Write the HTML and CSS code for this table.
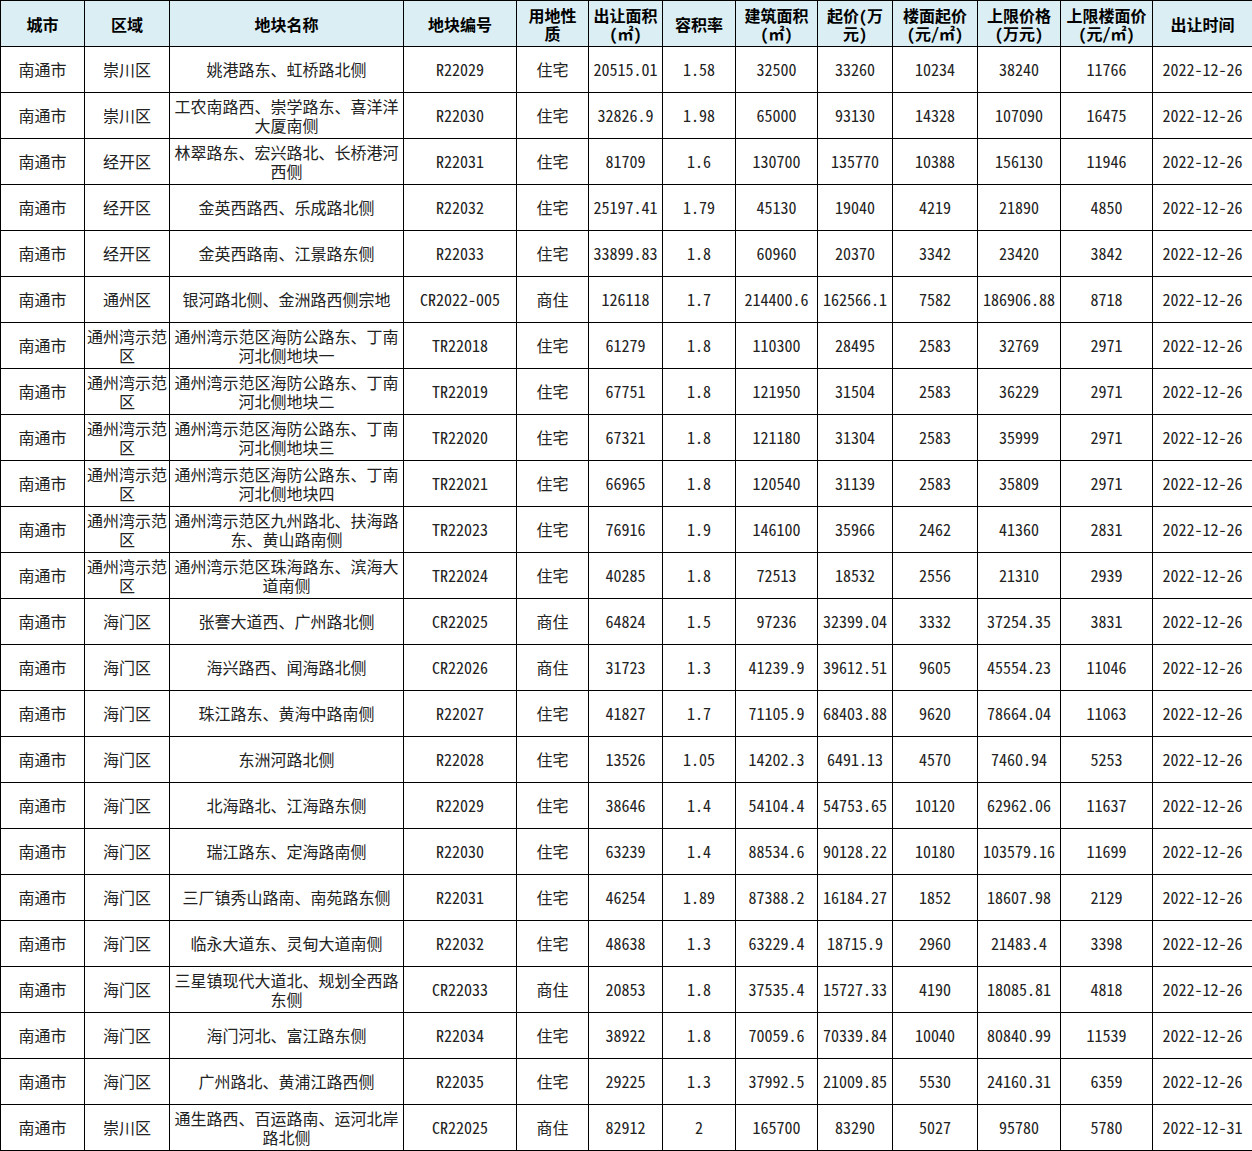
FILE: index.html
```html
<!DOCTYPE html>
<html lang="zh-CN">
<head>
<meta charset="utf-8">
<title>南通市土地出让</title>
<link rel="stylesheet" href="styles.css">
</head>
<body>
<table class="land">
<colgroup>
<col class="c1"><col class="c2"><col class="c3"><col class="c4"><col class="c5"><col class="c6"><col class="c7"><col class="c8"><col class="c9"><col class="c10"><col class="c11"><col class="c12"><col class="c13">
</colgroup>
<thead>
<tr>
<th>城市</th><th>区域</th><th>地块名称</th><th>地块编号</th><th class="tight">用地性质</th><th>出让面积(㎡)</th><th>容积率</th><th>建筑面积(㎡)</th><th>起价(万元)</th><th>楼面起价(元/㎡)</th><th>上限价格(万元)</th><th>上限楼面价(元/㎡)</th><th>出让时间</th>
</tr>
</thead>
<tbody>
<tr><td>南通市</td><td>崇川区</td><td>姚港路东、虹桥路北侧</td><td>R22029</td><td>住宅</td><td>20515.01</td><td>1.58</td><td>32500</td><td>33260</td><td>10234</td><td>38240</td><td>11766</td><td>2022-12-26</td></tr>
<tr><td>南通市</td><td>崇川区</td><td>工农南路西、崇学路东、喜洋洋大厦南侧</td><td>R22030</td><td>住宅</td><td>32826.9</td><td>1.98</td><td>65000</td><td>93130</td><td>14328</td><td>107090</td><td>16475</td><td>2022-12-26</td></tr>
<tr><td>南通市</td><td>经开区</td><td>林翠路东、宏兴路北、长桥港河西侧</td><td>R22031</td><td>住宅</td><td>81709</td><td>1.6</td><td>130700</td><td>135770</td><td>10388</td><td>156130</td><td>11946</td><td>2022-12-26</td></tr>
<tr><td>南通市</td><td>经开区</td><td>金英西路西、乐成路北侧</td><td>R22032</td><td>住宅</td><td>25197.41</td><td>1.79</td><td>45130</td><td>19040</td><td>4219</td><td>21890</td><td>4850</td><td>2022-12-26</td></tr>
<tr><td>南通市</td><td>经开区</td><td>金英西路南、江景路东侧</td><td>R22033</td><td>住宅</td><td>33899.83</td><td>1.8</td><td>60960</td><td>20370</td><td>3342</td><td>23420</td><td>3842</td><td>2022-12-26</td></tr>
<tr><td>南通市</td><td>通州区</td><td>银河路北侧、金洲路西侧宗地</td><td>CR2022-005</td><td>商住</td><td>126118</td><td>1.7</td><td>214400.6</td><td>162566.1</td><td>7582</td><td>186906.88</td><td>8718</td><td>2022-12-26</td></tr>
<tr><td>南通市</td><td>通州湾示范区</td><td>通州湾示范区海防公路东、丁南河北侧地块一</td><td>TR22018</td><td>住宅</td><td>61279</td><td>1.8</td><td>110300</td><td>28495</td><td>2583</td><td>32769</td><td>2971</td><td>2022-12-26</td></tr>
<tr><td>南通市</td><td>通州湾示范区</td><td>通州湾示范区海防公路东、丁南河北侧地块二</td><td>TR22019</td><td>住宅</td><td>67751</td><td>1.8</td><td>121950</td><td>31504</td><td>2583</td><td>36229</td><td>2971</td><td>2022-12-26</td></tr>
<tr><td>南通市</td><td>通州湾示范区</td><td>通州湾示范区海防公路东、丁南河北侧地块三</td><td>TR22020</td><td>住宅</td><td>67321</td><td>1.8</td><td>121180</td><td>31304</td><td>2583</td><td>35999</td><td>2971</td><td>2022-12-26</td></tr>
<tr><td>南通市</td><td>通州湾示范区</td><td>通州湾示范区海防公路东、丁南河北侧地块四</td><td>TR22021</td><td>住宅</td><td>66965</td><td>1.8</td><td>120540</td><td>31139</td><td>2583</td><td>35809</td><td>2971</td><td>2022-12-26</td></tr>
<tr><td>南通市</td><td>通州湾示范区</td><td>通州湾示范区九州路北、扶海路东、黄山路南侧</td><td>TR22023</td><td>住宅</td><td>76916</td><td>1.9</td><td>146100</td><td>35966</td><td>2462</td><td>41360</td><td>2831</td><td>2022-12-26</td></tr>
<tr><td>南通市</td><td>通州湾示范区</td><td>通州湾示范区珠海路东、滨海大道南侧</td><td>TR22024</td><td>住宅</td><td>40285</td><td>1.8</td><td>72513</td><td>18532</td><td>2556</td><td>21310</td><td>2939</td><td>2022-12-26</td></tr>
<tr><td>南通市</td><td>海门区</td><td>张謇大道西、广州路北侧</td><td>CR22025</td><td>商住</td><td>64824</td><td>1.5</td><td>97236</td><td>32399.04</td><td>3332</td><td>37254.35</td><td>3831</td><td>2022-12-26</td></tr>
<tr><td>南通市</td><td>海门区</td><td>海兴路西、闻海路北侧</td><td>CR22026</td><td>商住</td><td>31723</td><td>1.3</td><td>41239.9</td><td>39612.51</td><td>9605</td><td>45554.23</td><td>11046</td><td>2022-12-26</td></tr>
<tr><td>南通市</td><td>海门区</td><td>珠江路东、黄海中路南侧</td><td>R22027</td><td>住宅</td><td>41827</td><td>1.7</td><td>71105.9</td><td>68403.88</td><td>9620</td><td>78664.04</td><td>11063</td><td>2022-12-26</td></tr>
<tr><td>南通市</td><td>海门区</td><td>东洲河路北侧</td><td>R22028</td><td>住宅</td><td>13526</td><td>1.05</td><td>14202.3</td><td>6491.13</td><td>4570</td><td>7460.94</td><td>5253</td><td>2022-12-26</td></tr>
<tr><td>南通市</td><td>海门区</td><td>北海路北、江海路东侧</td><td>R22029</td><td>住宅</td><td>38646</td><td>1.4</td><td>54104.4</td><td>54753.65</td><td>10120</td><td>62962.06</td><td>11637</td><td>2022-12-26</td></tr>
<tr><td>南通市</td><td>海门区</td><td>瑞江路东、定海路南侧</td><td>R22030</td><td>住宅</td><td>63239</td><td>1.4</td><td>88534.6</td><td>90128.22</td><td>10180</td><td>103579.16</td><td>11699</td><td>2022-12-26</td></tr>
<tr><td>南通市</td><td>海门区</td><td>三厂镇秀山路南、南苑路东侧</td><td>R22031</td><td>住宅</td><td>46254</td><td>1.89</td><td>87388.2</td><td>16184.27</td><td>1852</td><td>18607.98</td><td>2129</td><td>2022-12-26</td></tr>
<tr><td>南通市</td><td>海门区</td><td>临永大道东、灵甸大道南侧</td><td>R22032</td><td>住宅</td><td>48638</td><td>1.3</td><td>63229.4</td><td>18715.9</td><td>2960</td><td>21483.4</td><td>3398</td><td>2022-12-26</td></tr>
<tr><td>南通市</td><td>海门区</td><td>三星镇现代大道北、规划全西路东侧</td><td>CR22033</td><td>商住</td><td>20853</td><td>1.8</td><td>37535.4</td><td>15727.33</td><td>4190</td><td>18085.81</td><td>4818</td><td>2022-12-26</td></tr>
<tr><td>南通市</td><td>海门区</td><td>海门河北、富江路东侧</td><td>R22034</td><td>住宅</td><td>38922</td><td>1.8</td><td>70059.6</td><td>70339.84</td><td>10040</td><td>80840.99</td><td>11539</td><td>2022-12-26</td></tr>
<tr><td>南通市</td><td>海门区</td><td>广州路北、黄浦江路西侧</td><td>R22035</td><td>住宅</td><td>29225</td><td>1.3</td><td>37992.5</td><td>21009.85</td><td>5530</td><td>24160.31</td><td>6359</td><td>2022-12-26</td></tr>
<tr><td>南通市</td><td>崇川区</td><td>通生路西、百运路南、运河北岸路北侧</td><td>CR22025</td><td>商住</td><td>82912</td><td>2</td><td>165700</td><td>83290</td><td>5027</td><td>95780</td><td>5780</td><td>2022-12-31</td></tr>
</tbody>
</table>
</body>
</html>
```

FILE: styles.css
```css
html, body {
  margin: 0;
  padding: 0;
  background: #ffffff;
}

.land {
  border-collapse: collapse;
  table-layout: fixed;
  width: 1252px;
  font-family: "Noto Sans Mono CJK SC", "Noto Sans CJK SC", "Liberation Mono", monospace;
  font-size: 16px;
  color: #222222;
}

.land .c1 { width: 84px; }
.land .c2 { width: 85px; }
.land .c3 { width: 234px; }
.land .c4 { width: 113px; }
.land .c5 { width: 72px; }
.land .c6 { width: 74px; }
.land .c7 { width: 73px; }
.land .c8 { width: 82px; }
.land .c9 { width: 75px; }
.land .c10 { width: 85px; }
.land .c11 { width: 83px; }
.land .c12 { width: 92px; }
.land .c13 { width: 100px; }

.land tr {
  height: 46px;
}

.land th,
.land td {
  border: 1px solid #000000;
  padding: 0 2px;
  text-align: center;
  vertical-align: middle;
  overflow: hidden;
}

.land th {
  background: #daeef3;
  font-weight: bold;
  line-height: 18px;
  color: #000000;
}

.land th.tight {
  padding: 0 6px;
}

.land td {
  font-weight: normal;
  line-height: 19px;
}
```
